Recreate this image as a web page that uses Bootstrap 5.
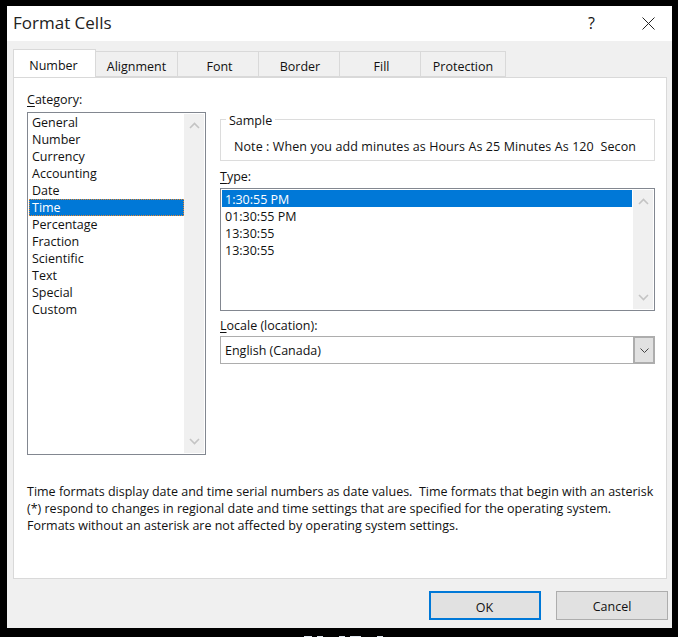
<!DOCTYPE html>
<html lang="en">
<head>
<meta charset="utf-8">
<title>Format Cells</title>
<link rel="stylesheet" href="https://cdn.jsdelivr.net/npm/bootstrap@5.3.0/dist/css/bootstrap.min.css">
<style>
html,body{height:100%;overflow:hidden}
body{background:#000;font-family:"Open Sans","Noto Sans",sans-serif;font-size:12.5px;line-height:17px;color:#111;padding:6px 6px 9px 7px}
.dlg{height:622px;background:#f0f0f0}
.dlg-title{height:35px;background:#fff;padding:0 0 0 6px}
.dlg-title h1{font-family:inherit;font-size:17px;font-weight:400;line-height:31px;margin:0 0 3px;color:#222}
.tit-help{font-size:16px;width:14px;margin-right:40px;line-height:33px}
.tit-close{margin-right:17px}
.tabs-row{margin:9px 0 0 6px;height:27px;position:relative;z-index:1}
.tabx{height:26px;margin-top:1px;background:#f0f0f0;border:1px solid #d9d9d9;border-left:0;text-align:center;line-height:29px}
.tabx.on{height:28px;margin-top:-1px;background:#fff;border:1px solid #d9d9d9;border-bottom:0;width:83px;line-height:32px;padding-right:2px}
.tw-align{width:82px}
.tw-font{width:81px;padding-left:3px}
.tw-border{width:81px;padding-left:2px}
.tw-fill{width:81px;padding-left:3px}
.tw-prot{width:85px}
.pane{margin:0 5px 0 6px;height:502px;background:#fff;border:1px solid #d9d9d9;padding:13px 11px 0 13px}
.lbl{height:17px;line-height:17px}
.cat-col{width:179px}
.type-col{width:435px;margin-left:14px}
.lst{border:1px solid #828790;background:#fff;padding:1px}
.cat-lst{height:343px;margin-top:4px}
.type-lst{height:123px;margin-top:3px}
.itm{height:17px;line-height:17px;padding-left:3px;white-space:nowrap}
.type-lst .itm{line-height:19px}
.itm.sel{background:#0078d7;color:#fff}
.cat-lst .itm.sel{outline:1px dotted #e8872c;outline-offset:-1px}
.sbar{width:20px;background:#f0f0f0}
.type-lst .sbar{margin-left:1px}
.sample{height:42px;margin-top:28px;border:1px solid #dcdcdc;padding:18px 0 0 13px;position:relative;white-space:pre;letter-spacing:.09px}
.sample-t{position:absolute;left:5px;top:-9px;background:#fff;padding:0 3px;line-height:19px;letter-spacing:0}
.type-lbl{margin-top:7px}
.loc-lbl{margin-top:5px;line-height:19px}
.cmb{height:28px;margin-top:3px;border:1px solid #adadad;background:#fff;padding-left:4px;line-height:28px}
.cmb-btn{width:22px;margin:-1px -1px -1px 0;background:#e1e1e1;border:2px solid #adadad}
.descr{margin-top:28px;white-space:pre}
.foot{padding:12px 4px 0 0}
.wbtn{width:112px;height:29px;border-radius:0;background:#e1e1e1;border:1px solid #adadad;padding:0;font-size:12.5px;color:#111;line-height:29px}
.wbtn.dflt{border:2px solid #0078d7;margin-right:15px;padding-right:1px}
u{text-underline-offset:2px}
.page-scrap{position:absolute;left:298px;top:636px;width:90px;height:1px;background:linear-gradient(90deg,#000 6px,#dfe6ee 6px,#dfe6ee 14px,#000 14px,#000 19px,#dfe6ee 19px,#dfe6ee 25px,#000 25px,#000 41px,#dfe6ee 41px,#dfe6ee 47px,#000 47px,#000 52px,#dfe6ee 52px,#dfe6ee 63px,#000 63px,#000 79px,#dfe6ee 79px,#dfe6ee 85px,#000 85px)}
</style>
</head>
<body>
<div class="dlg d-flex flex-column">
  <div class="dlg-title d-flex align-items-center">
    <h1 class="flex-grow-1">Format Cells</h1>
    <span class="tit-help">?</span>
    <svg class="tit-close" width="13" height="13" viewBox="0 0 13 13"><path d="M.5.5l12 12M12.5.5l-12 12" stroke="#222" fill="none"/></svg>
  </div>
  <div class="tabs-row d-flex">
    <div class="tabx on">Number</div>
    <div class="tabx tw-align">Alignment</div>
    <div class="tabx tw-font">Font</div>
    <div class="tabx tw-border">Border</div>
    <div class="tabx tw-fill">Fill</div>
    <div class="tabx tw-prot">Protection</div>
  </div>
  <div class="pane">
    <div class="d-flex">
      <div class="cat-col">
        <div class="lbl"><u>C</u>ategory:</div>
        <div class="lst cat-lst d-flex">
          <div class="flex-grow-1">
            <div class="itm">General</div><div class="itm">Number</div><div class="itm">Currency</div><div class="itm">Accounting</div><div class="itm">Date</div><div class="itm sel">Time</div><div class="itm">Percentage</div><div class="itm">Fraction</div><div class="itm">Scientific</div><div class="itm">Text</div><div class="itm">Special</div><div class="itm">Custom</div>
          </div>
          <div class="sbar d-flex flex-column justify-content-between align-items-center py-2">
            <svg width="11" height="7" viewBox="0 0 11 7"><path d="M1 6l4.500-4.500L10 6" stroke="#c4c4c4" stroke-width="1.600" fill="none"/></svg>
            <svg width="11" height="7" viewBox="0 0 11 7"><path d="M1 1l4.500 4.500L10 1" stroke="#c4c4c4" stroke-width="1.600" fill="none"/></svg>
          </div>
        </div>
      </div>
      <div class="type-col">
        <div class="sample"><span class="sample-t">Sample</span>Note : When you add minutes as Hours As 25 Minutes As 120  Secon</div>
        <div class="lbl type-lbl"><u>T</u>ype:</div>
        <div class="lst type-lst d-flex">
          <div class="flex-grow-1">
            <div class="itm sel">1:30:55 PM</div><div class="itm">01:30:55 PM</div><div class="itm">13:30:55</div><div class="itm">13:30:55</div>
          </div>
          <div class="sbar d-flex flex-column justify-content-between align-items-center py-2">
            <svg width="11" height="7" viewBox="0 0 11 7"><path d="M1 6l4.500-4.500L10 6" stroke="#c4c4c4" stroke-width="1.600" fill="none"/></svg>
            <svg width="11" height="7" viewBox="0 0 11 7"><path d="M1 1l4.500 4.500L10 1" stroke="#c4c4c4" stroke-width="1.600" fill="none"/></svg>
          </div>
        </div>
        <div class="lbl loc-lbl"><u>L</u>ocale (location):</div>
        <div class="cmb d-flex">
          <span class="flex-grow-1">English (Canada)</span>
          <span class="cmb-btn d-flex align-items-center justify-content-center">
            <svg width="9" height="5" viewBox="0 0 9 5"><path d="M.5.500l4 4 4-4" stroke="#444" fill="none"/></svg>
          </span>
        </div>
      </div>
    </div>
    <div class="descr">Time formats display date and time serial numbers as date values.  Time formats that begin with an asterisk
(*) respond to changes in regional date and time settings that are specified for the operating system.
Formats without an asterisk are not affected by operating system settings.</div>
  </div>
  <div class="foot d-flex justify-content-end">
    <button type="button" class="btn wbtn dflt">OK</button>
    <button type="button" class="btn wbtn">Cancel</button>
  </div>
</div>
<div class="page-scrap"></div>
</body>
</html>
